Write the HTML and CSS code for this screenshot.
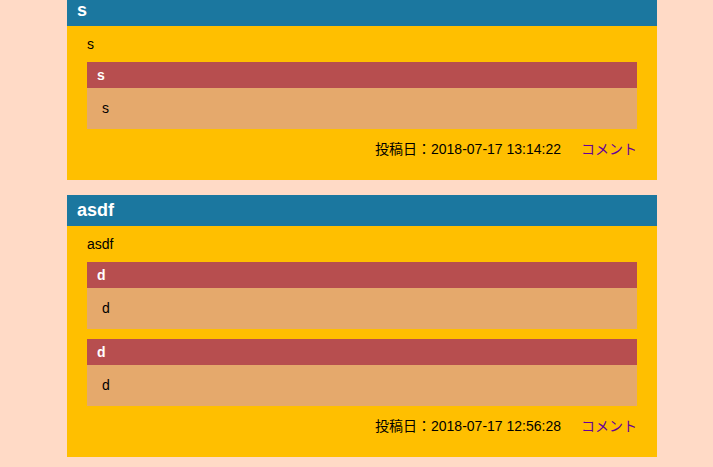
FILE: index.html
```html
<!DOCTYPE html>
<html lang="ja">
<head>
<meta charset="utf-8">
<title>posts</title>
<link rel="stylesheet" href="styles.css">
</head>
<body>
<div class="list">
  <div class="post">
    <div class="post-title">s</div>
    <p class="post-body">s</p>
    <div class="reply">
      <div class="reply-title">s</div>
      <div class="reply-body">s</div>
    </div>
    <div class="post-footer"><span class="date">投稿日：2018-07-17 13:14:22</span><a class="comment" href="#">コメント</a></div>
  </div>
  <div class="post">
    <div class="post-title">asdf</div>
    <p class="post-body">asdf</p>
    <div class="reply">
      <div class="reply-title">d</div>
      <div class="reply-body">d</div>
    </div>
    <div class="reply">
      <div class="reply-title">d</div>
      <div class="reply-body">d</div>
    </div>
    <div class="post-footer"><span class="date">投稿日：2018-07-17 12:56:28</span><a class="comment" href="#">コメント</a></div>
  </div>
</div>
</body>
</html>
```
FILE: styles.css
```css
html, body {
  margin: 0;
  padding: 0;
  background: #ffdac6;
  font-family: "Liberation Sans", "Noto Sans CJK JP", sans-serif;
  font-size: 14px;
  color: #000;
}
.list {
  display: flex;
  flex-direction: column;
  gap: 15px;
  width: 590px;
  margin: -5px 0 0 67px;
}
.post {
  background: #ffbf00;
  padding-bottom: 21px;
}
.post-title {
  background: #1b779f;
  color: #fff;
  font-weight: bold;
  font-size: 18px;
  height: 31px;
  line-height: 31px;
  padding-left: 10px;
}
.post-body {
  margin: 0;
  padding: 8px 20px 0;
  line-height: 20px;
}
.reply {
  margin: 8px 20px 0;
}
.reply + .reply {
  margin-top: 10px;
}
.reply-title {
  background: #b74e4f;
  color: #fff;
  font-weight: bold;
  font-size: 14px;
  height: 26px;
  line-height: 26px;
  padding-left: 10px;
}
.reply-body {
  background: #e5a96c;
  line-height: 20px;
  padding: 10px 15px 11px;
}
.post-footer {
  display: flex;
  justify-content: flex-end;
  gap: 20px;
  margin-top: 10px;
  padding-right: 20px;
  line-height: 20px;
}
.comment {
  color: #660099;
  text-decoration: none;
}
```
